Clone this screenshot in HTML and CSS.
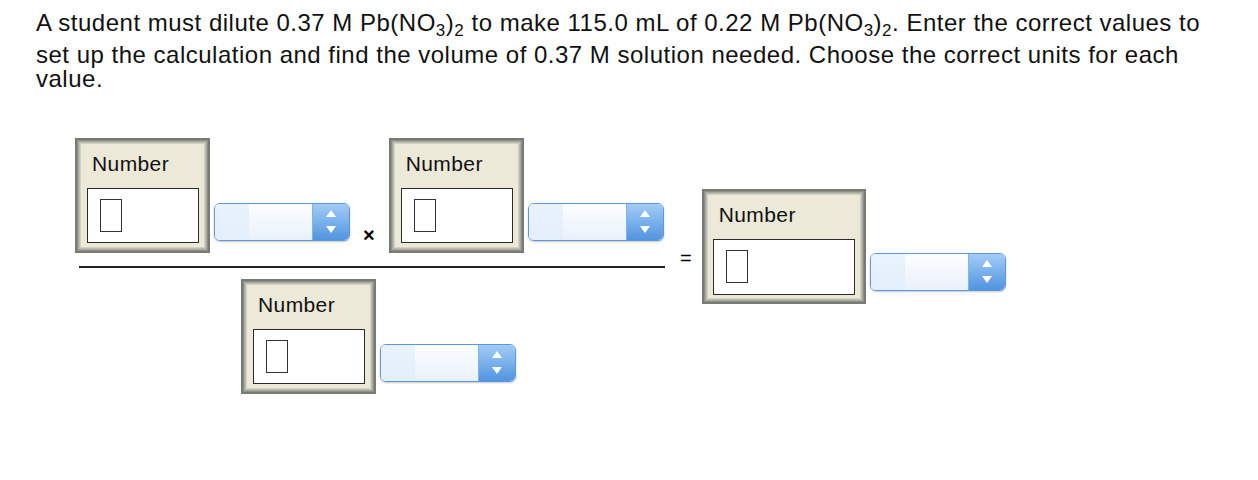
FILE: index.html
```html
<!DOCTYPE html>
<html>
<head>
<meta charset="utf-8">
<link rel="stylesheet" href="styles.css">
</head>
<body>
<p class="question">A student must dilute 0.37 M Pb(NO<sub>3</sub>)<sub>2</sub> to make 115.0 mL of 0.22 M Pb(NO<sub>3</sub>)<sub>2</sub>. Enter the correct values to set up the calculation and find the volume of 0.37 M solution needed. Choose the correct units for each value.</p>

<div class="equation">
  <div class="fraction">
    <div class="num-row">
      <div class="numbox">
        <div class="label">Number</div>
        <div class="field"><span class="caret"></span></div>
      </div>
      <div class="sel"><span class="sel-field"></span><span class="sel-btn"><svg width="10" height="24" viewBox="0 0 10 24"><polygon points="5,0 10,7 0,7" fill="#fff"/><polygon points="0,16 10,16 5,23" fill="#fff"/></svg></span></div>
      <span class="op times">×</span>
      <div class="numbox">
        <div class="label">Number</div>
        <div class="field"><span class="caret"></span></div>
      </div>
      <div class="sel"><span class="sel-field"></span><span class="sel-btn"><svg width="10" height="24" viewBox="0 0 10 24"><polygon points="5,0 10,7 0,7" fill="#fff"/><polygon points="0,16 10,16 5,23" fill="#fff"/></svg></span></div>
    </div>
    <div class="bar"></div>
    <div class="den-row">
      <div class="numbox">
        <div class="label">Number</div>
        <div class="field"><span class="caret"></span></div>
      </div>
      <div class="sel"><span class="sel-field"></span><span class="sel-btn"><svg width="10" height="24" viewBox="0 0 10 24"><polygon points="5,0 10,7 0,7" fill="#fff"/><polygon points="0,16 10,16 5,23" fill="#fff"/></svg></span></div>
    </div>
  </div>
  <span class="op equals">=</span>
  <div class="result">
    <div class="numbox wide">
      <div class="label">Number</div>
      <div class="field"><span class="caret"></span></div>
    </div>
    <div class="sel"><span class="sel-field"></span><span class="sel-btn"><svg width="10" height="24" viewBox="0 0 10 24"><polygon points="5,0 10,7 0,7" fill="#fff"/><polygon points="0,16 10,16 5,23" fill="#fff"/></svg></span></div>
  </div>
</div>
</body>
</html>
```

FILE: styles.css
```css
html, body {
  margin: 0;
  padding: 0;
  background: #fff;
}

body {
  font-family: "Liberation Sans", Arial, sans-serif;
  color: #000;
}

.question {
  margin: 0;
  padding: 11px 0 0 36px;
  width: 1185px;
  font-size: 24px;
  line-height: 24px;
  letter-spacing: 0.5px;
  color: #111;
}

.question sub {
  font-size: 17px;
  line-height: 24px;
  vertical-align: -5px;
}

.equation {
  display: flex;
  align-items: flex-start;
  margin: 47px 0 0 75px;
}

.fraction {
  display: flex;
  flex-direction: column;
}

.num-row {
  display: flex;
  align-items: flex-end;
}

.den-row {
  display: flex;
  align-items: flex-end;
  padding-left: 166px;
}

.bar {
  width: 586px;
  margin: 13px 0 11px 4px;
  border-top: 2px solid #222;
}

.numbox {
  box-sizing: border-box;
  width: 135px;
  height: 115px;
  padding: 6px 9px 8px 10px;
  background: #ece9d8;
  border: 2px solid #767b74;
  box-shadow:
    inset 0 0 0 1px #8d918a,
    inset 0 0 0 2px #a5a89f,
    inset 0 0 0 3px #bdbdb2,
    inset 0 0 0 4px #d3d1c3;
}

.numbox .label {
  height: 23px;
  margin: 6px 0 13px 5px;
  font-size: 21px;
  line-height: 23px;
  letter-spacing: 0.4px;
  color: #111;
}

.field {
  box-sizing: border-box;
  height: 55px;
  background: #fff;
  border: 1px solid #2a2a2a;
  padding: 10px 0 0 12px;
}

.caret {
  display: block;
  box-sizing: border-box;
  width: 22px;
  height: 33px;
  border: 1px solid #333;
}

.numbox.wide {
  width: 164px;
  padding: 6px 9px 7px 9px;
}

.numbox.wide .label {
  margin-left: 6px;
}

.numbox.wide .field {
  height: 56px;
}

.sel {
  box-sizing: border-box;
  display: flex;
  width: 136px;
  height: 38px;
  margin: 0 0 12px 4px;
  border: 1px solid #5d98de;
  border-radius: 6px;
  overflow: hidden;
  box-shadow: 0 1px 2px rgba(0, 0, 0, 0.22);
}

.sel-field {
  flex: 1;
  background:
    linear-gradient(to right, rgba(225, 238, 252, 0.7) 0, rgba(225, 238, 252, 0.7) 34px, rgba(255, 255, 255, 0) 34px),
    linear-gradient(#fdfeff, #e8f1fb);
}

.sel-btn {
  width: 36px;
  display: flex;
  align-items: center;
  justify-content: center;
  border-left: 1px solid #80b2ec;
  background: linear-gradient(#a2ccf7, #5194e0);
}

.op {
  font-size: 20px;
  line-height: 20px;
  color: #000;
}

.times {
  margin: 0 14px 8px 13px;
  font-weight: bold;
}

.equals {
  margin: 110px 10px 0 15px;
}

.result {
  display: flex;
  align-items: flex-end;
  margin-top: 51px;
}

.result .sel {
  margin-bottom: 13px;
}
```
